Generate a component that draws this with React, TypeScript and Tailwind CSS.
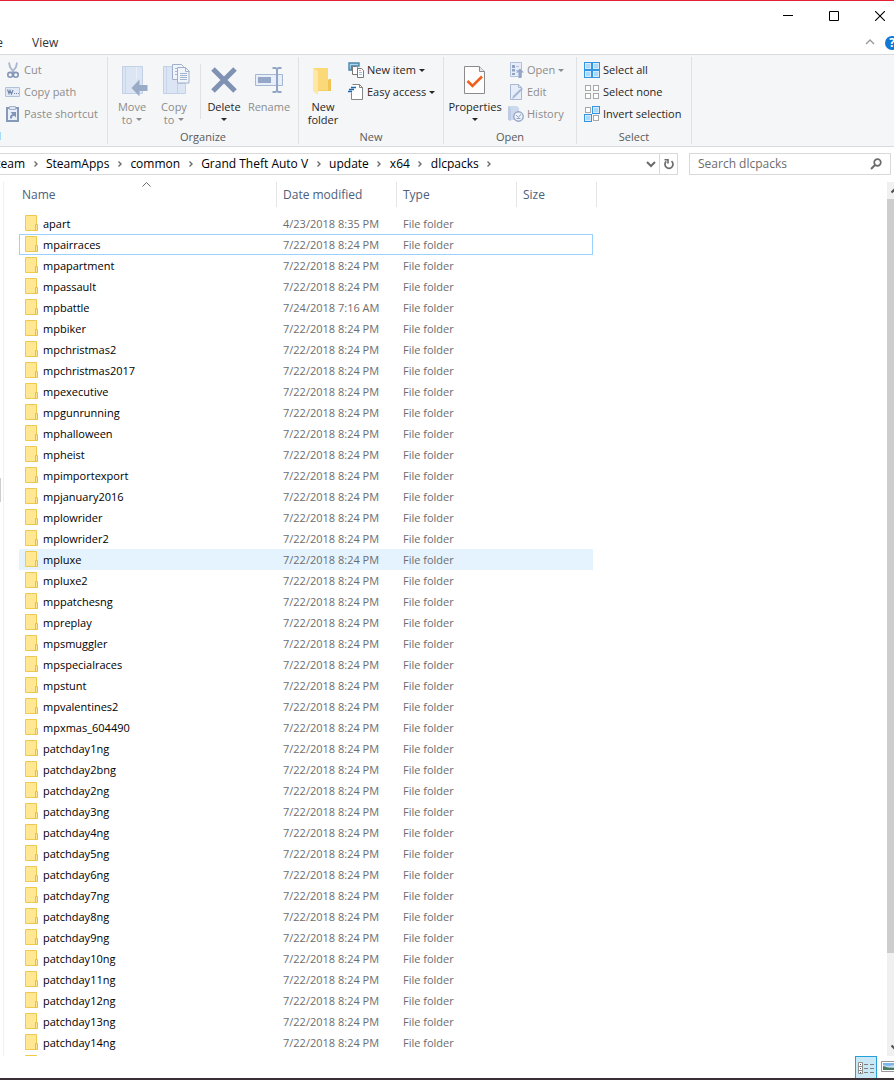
import type { ReactNode } from "react";
import { clsx } from "clsx";

const crumbs = [
  "SteamApps",
  "common",
  "Grand Theft Auto V",
  "update",
  "x64",
  "dlcpacks",
];

const usual_date = "7/22/2018 8:24 PM";

const folders = [
  { name: "apart", date: "4/23/2018 8:35 PM" },
  { name: "mpairraces", focused: true },
  { name: "mpapartment" },
  { name: "mpassault" },
  { name: "mpbattle", date: "7/24/2018 7:16 AM" },
  { name: "mpbiker" },
  { name: "mpchristmas2" },
  { name: "mpchristmas2017" },
  { name: "mpexecutive" },
  { name: "mpgunrunning" },
  { name: "mphalloween" },
  { name: "mpheist" },
  { name: "mpimportexport" },
  { name: "mpjanuary2016" },
  { name: "mplowrider" },
  { name: "mplowrider2" },
  { name: "mpluxe", hovered: true },
  { name: "mpluxe2" },
  { name: "mppatchesng" },
  { name: "mpreplay" },
  { name: "mpsmuggler" },
  { name: "mpspecialraces" },
  { name: "mpstunt" },
  { name: "mpvalentines2" },
  { name: "mpxmas_604490" },
  { name: "patchday1ng" },
  { name: "patchday2bng" },
  { name: "patchday2ng" },
  { name: "patchday3ng" },
  { name: "patchday4ng" },
  { name: "patchday5ng" },
  { name: "patchday6ng" },
  { name: "patchday7ng" },
  { name: "patchday8ng" },
  { name: "patchday9ng" },
  { name: "patchday10ng" },
  { name: "patchday11ng" },
  { name: "patchday12ng" },
  { name: "patchday13ng" },
  { name: "patchday14ng" },
  { name: "patchday15ng" },
];

interface IIcon {
  size?: number;
  children: ReactNode;
}

const Icon = ({ size = 16, children }: IIcon) => (
  <svg
    width={size}
    height={size}
    viewBox={`0 0 ${size} ${size}`}
    fill="none"
    className="shrink-0"
    aria-hidden="true"
  >
    {children}
  </svg>
);

const Caret = () => (
  <svg width="6" height="3" viewBox="0 0 6 3" className="shrink-0" aria-hidden="true">
    <path d="M0 0h6L3 3z" fill="currentColor" />
  </svg>
);

const CutIcon = () => (
  <Icon>
    <path d="M4 0.5L5 5L9.5 11M12 0.5L11 5L6.5 11" stroke="#a9b8cf" strokeWidth="1.8" />
    <circle cx="5.2" cy="12.8" r="2.4" stroke="#8497b8" strokeWidth="1.6" />
    <circle cx="10.8" cy="12.8" r="2.4" stroke="#8497b8" strokeWidth="1.6" />
  </Icon>
);

const CopyPathIcon = () => (
  <Icon>
    <path d="M0.5 3.5h14v9h-14z" fill="#e2eaf6" stroke="#b3c2db" />
    <path d="M2.5 5.5l1.5 4 1-3 1.5 3.5 1.5-4" stroke="#7387ab" strokeWidth="1.2" />
    <path d="M9 9h1v1H9zM11 9h1v1h-1zM13 9h.8v1H13z" fill="#7387ab" />
  </Icon>
);

const PasteShortcutIcon = () => (
  <Icon>
    <path d="M2 2h11v13H2z" fill="#e9f0fa" stroke="#8799b9" strokeWidth="2" />
    <path d="M4.5 0.5h6v3h-6z" fill="#dfe7f3" stroke="#a4b2ca" />
    <path d="M5 12.5c-.3-3 .8-4 2.500-4.300L5.600 6H11v5.500L9.200 9.800C7.500 10 6.800 11 7 12.500z" fill="#8094b7" />
  </Icon>
);

const MoveIcon = () => (
  <Icon size={32}>
    <path d="M6.500 2.500h20v27h-20z" fill="#dbe5f3" stroke="#c3d1e6" />
    <path d="M9.500 3v26" stroke="#c9d6ea" />
    <path d="M20.500 3v12" stroke="#e8eff8" />
    <path d="M23.500 15.500v5.500h8v6h-8v5.500l-8-8.500z" fill="#9aabc7" />
  </Icon>
);

const CopyIcon = () => (
  <Icon size={32}>
    <path d="M5.500 2.500h14v27h-14z" fill="#dbe5f3" stroke="#c3d1e6" />
    <path d="M19.500 19.500h8v10h-8z" fill="#dbe5f3" stroke="#c3d1e6" />
    <path d="M8.500 3v26" stroke="#c9d6ea" />
    <path d="M14.500 0.500h9l2 2v13h-11z" fill="#f1f5fb" stroke="#9fb0cc" />
    <path d="M17 4.500h5M17 7.500h3M17 10.500h3" stroke="#a9b9d3" />
    <path d="M19.500 3.500h8l3.500 3.500v12h-11.500z" fill="#f1f5fb" stroke="#9fb0cc" />
    <path d="M27.500 3.500v4h4M22 9.500h7M22 11.500h7M22 13.500h7M22 15.500h7" stroke="#a3b4cf" />
  </Icon>
);

const DeleteIcon = () => (
  <Icon size={32}>
    <path d="M5 5l22 22M27 5L5 27" stroke="#8092b3" strokeWidth="5" />
  </Icon>
);

const RenameIcon = () => (
  <Icon size={32}>
    <path d="M2.500 10.500h27v11h-27z" fill="#e6eefa" stroke="#a6b7d3" />
    <path d="M5 13h13v6H5z" fill="#94a7c6" />
    <path d="M19.500 4h3l1.500 1 1.500-1h3M24 4.500v23M19.500 28h3l1.500-1 1.500 1h3" stroke="#93a5c3" strokeWidth="2" />
  </Icon>
);

const NewFolderIcon = () => (
  <Icon size={32}>
    <path d="M6 4h15v12h3v11H10V8z" fill="#f5cf66" />
    <path d="M6 4h15v22H10z" fill="#fbd978" />
    <path d="M22 15h2v12h-3V16z" fill="#f0c455" />
    <path d="M6 4l5 3v24l-5-4z" fill="#ffe8a5" />
  </Icon>
);

const PropertiesIcon = () => (
  <Icon size={32}>
    <path d="M5.500 2.500h15l5 5v22h-20z" fill="#fdfdfd" stroke="#8b8b8b" />
    <path d="M20.500 2.500v5h5" fill="#e6e6e6" stroke="#8b8b8b" />
    <path d="M8.500 17l5 5L23 12.500" stroke="#f0601c" strokeWidth="2.600" />
  </Icon>
);

const NewItemIcon = () => (
  <Icon>
    <path d="M1 1h10v3H3.500v4H1z" fill="#a9d8f0" stroke="#4a86ab" strokeWidth="1.400" />
    <path d="M4.500 4.500h4l1 1v7h-5z" fill="#fff" stroke="#777" />
    <path d="M9.500 6.500h4l2 2v7h-6z" fill="#fff" stroke="#777" />
    <path d="M11 10.500h3M11 12.500h3" stroke="#8fc0ea" />
    <path d="M11 8.500h2" stroke="#e89a93" />
  </Icon>
);

const EasyAccessIcon = () => (
  <Icon>
    <path d="M4.500 0.500h7l3 3v12h-11v-7" fill="#fff" stroke="#858585" />
    <path d="M11.500 0.500v3h3" stroke="#858585" />
    <path d="M3 3.500h5M1 5.500h5M0 7.500h4" stroke="#1f68ad" strokeWidth="1.300" />
  </Icon>
);

const OpenIcon = () => (
  <Icon>
    <path d="M2.500 0.500h11v14h-11z" fill="#e6edf8" stroke="#b3c1da" />
    <path d="M4 3h3v3H4zM4 7h3v2.500H4zM4 11h3v2H4z" fill="#8fa2c3" />
    <path d="M8 4.500h3M8 8.500h2" stroke="#b3c1da" />
    <path d="M12 6.500l4 4h-2.500V16h-3v-5.500H8z" fill="#94a6c5" />
  </Icon>
);

const EditIcon = () => (
  <Icon>
    <path d="M2.500 0.500h8l3 3v12h-11z" fill="#e6edf8" stroke="#a9b8d3" />
    <path d="M10.500 0.500v3h3" stroke="#a9b8d3" />
    <path d="M15 5l-8.500 8.500L4 15l1-3L13.500 3.800z" fill="#a6b7d4" />
  </Icon>
);

const HistoryIcon = () => (
  <Icon>
    <path d="M0 0h9l2 2v12H0z" fill="#cddaed" />
    <path d="M0 0l3 2v13l-3-1z" fill="#bdcce4" />
    <circle cx="10.500" cy="10.500" r="4.700" fill="#eef3fa" stroke="#95a6c4" strokeWidth="1.400" />
    <path d="M8 9l2.500 2.500L13 8M8.500 12.500h4" stroke="#95a6c4" />
  </Icon>
);

interface ITiles {
  on: boolean[];
}

// 2x2 tile glyph shared by the three selection commands
const Tiles = ({ on }: ITiles) => (
  <Icon>
    {on.map((is_on, i) => {
      const x = (i % 2) * 8;
      const y = Math.floor(i / 2) * 8;
      return is_on ? (
        <g key={i}>
          <rect x={x + 0.5} y={y + 0.5} width="7" height="7" fill="#d3ebfd" stroke="#3495e3" />
          <rect x={x + 1.5} y={y + 1.5} width="5" height="5" fill="#a9d9fc" stroke="#d3ebfd" />
        </g>
      ) : (
        <rect key={i} x={x + 1.5} y={y + 1.5} width="5" height="5" fill="#fff" stroke="#a8a8a8" />
      );
    })}
  </Icon>
);

const FolderIcon = () => (
  <Icon>
    <path d="M2.500 0.500h11v15h-11z" fill="#ffe794" stroke="#edc94f" />
    <path d="M12.500 9.500h2v6h-2z" fill="#ffe794" stroke="#e6bf45" />
  </Icon>
);

interface ILargeButton {
  icon: ReactNode;
  label: string;
  second?: string;
  caret?: boolean;
  disabled?: boolean;
  width?: string;
}

const LargeButton = ({
  icon,
  label,
  second,
  caret,
  disabled,
  width = "w-[42px]",
}: ILargeButton) => (
  <button
    type="button"
    disabled={disabled}
    className={clsx(
      "flex shrink-0 flex-col items-center pt-[5px] leading-[13px] whitespace-nowrap",
      width,
      disabled ? "text-[#8c8c8c]" : "text-[#262626]",
    )}
  >
    {icon}
    <span className="mt-1">{label}</span>
    <span className="flex h-[13px] items-center gap-1">
      {second}
      {caret && <Caret />}
    </span>
  </button>
);

interface ISmallButton {
  icon: ReactNode;
  label: string;
  caret?: boolean;
  disabled?: boolean;
}

const SmallButton = ({ icon, label, caret, disabled }: ISmallButton) => (
  <button
    type="button"
    disabled={disabled}
    className={clsx(
      "flex h-[22px] items-center gap-[3px] whitespace-nowrap",
      disabled ? "text-[#8c8c8c]" : "text-[#262626]",
    )}
  >
    {icon}
    <span>{label}</span>
    {caret && <Caret />}
  </button>
);

interface IRibbonGroup {
  label?: string;
  width: string;
  children: ReactNode;
}

const RibbonGroup = ({ label, width, children }: IRibbonGroup) => (
  <section
    className={clsx(
      "my-0.5 flex shrink-0 flex-col justify-between border-r border-[#dfe1e3]",
      width,
    )}
  >
    <div className="flex pt-0.5">{children}</div>
    <h2 className="text-center leading-[14px] text-[#5a5a5a]">{label}</h2>
  </section>
);

const TitleBar = () => (
  <header className="-mr-[9px] flex h-[30px] shrink-0 justify-end border-t border-[#e81e36]">
    <button type="button" aria-label="Minimize" className="flex w-[46px] items-center justify-center">
      <Icon size={10}>
        <path d="M0 4.500h10" stroke="#000" />
      </Icon>
    </button>
    <button type="button" aria-label="Maximize" className="flex w-[46px] items-center justify-center">
      <Icon size={10}>
        <path d="M0.500 0.500h9v9h-9z" stroke="#000" />
      </Icon>
    </button>
    <button type="button" aria-label="Close" className="flex w-[46px] items-center justify-center">
      <Icon size={10}>
        <path d="M0 0l10 10M10 0L0 10" stroke="#000" strokeWidth="1.100" />
      </Icon>
    </button>
  </header>
);

const Tabs = () => (
  <nav className="flex h-6 shrink-0 items-center pt-0.5 text-[12px] text-[#333]">
    <button type="button" className="flex w-[3px] justify-end overflow-hidden">
      Share
    </button>
    <button type="button" className="ml-[29px]">
      View
    </button>
    <button type="button" aria-label="Minimize the Ribbon" className="ml-auto">
      <Icon size={10}>
        <path d="M1 6l4-4 4 4" stroke="#999" strokeWidth="1.400" />
      </Icon>
    </button>
    <button
      type="button"
      aria-label="Help"
      className="-mr-[5px] ml-[10px] size-3.5 rounded-full bg-[#0f78d4] text-center leading-[14px] font-bold text-white"
    >
      ?
    </button>
  </nav>
);

const Ribbon = () => (
  <div className="flex h-[93px] shrink-0 border-y border-[#d9dbdd] bg-[#f5f6f7]">
    <div className="mt-[77px] h-2 w-px shrink-0 bg-[#a5dcf8]" />
    <RibbonGroup width="w-[107px]">
      <div className="ml-1 flex flex-col">
        <SmallButton icon={<CutIcon />} label="Cut" disabled />
        <SmallButton icon={<CopyPathIcon />} label="Copy path" disabled />
        <SmallButton icon={<PasteShortcutIcon />} label="Paste shortcut" disabled />
      </div>
    </RibbonGroup>
    <RibbonGroup label="Organize" width="w-[191px]">
      <div className="ml-[3px] flex">
        <LargeButton icon={<MoveIcon />} label="Move" second="to" caret disabled />
        <LargeButton icon={<CopyIcon />} label="Copy" second="to" caret disabled />
        <div className="mt-[5px] mr-0.5 ml-[5px] h-[55px] w-px bg-[#dfe1e3]" />
        <LargeButton icon={<DeleteIcon />} label="Delete" caret />
        <LargeButton icon={<RenameIcon />} label="Rename" width="w-12" disabled />
      </div>
    </RibbonGroup>
    <RibbonGroup label="New" width="w-[145px]">
      <div className="ml-[3px] flex">
        <LargeButton icon={<NewFolderIcon />} label="New" second="folder" />
        <div className="ml-1 flex flex-col">
          <SmallButton icon={<NewItemIcon />} label="New item" caret />
          <SmallButton icon={<EasyAccessIcon />} label="Easy access" caret />
        </div>
      </div>
    </RibbonGroup>
    <RibbonGroup label="Open" width="w-[133px]">
      <div className="ml-[3px] flex">
        <LargeButton icon={<PropertiesIcon />} label="Properties" width="w-14" caret />
        <div className="ml-[5px] flex flex-col">
          <SmallButton icon={<OpenIcon />} label="Open" caret disabled />
          <SmallButton icon={<EditIcon />} label="Edit" disabled />
          <SmallButton icon={<HistoryIcon />} label="History" disabled />
        </div>
      </div>
    </RibbonGroup>
    <RibbonGroup label="Select" width="w-[115px]">
      <div className="ml-[7px] flex flex-col">
        <SmallButton icon={<Tiles on={[true, true, true, true]} />} label="Select all" />
        <SmallButton icon={<Tiles on={[false, false, false, false]} />} label="Select none" />
        <SmallButton icon={<Tiles on={[false, true, true, false]} />} label="Invert selection" />
      </div>
    </RibbonGroup>
  </div>
);

const CrumbArrow = () => (
  <span className="flex w-[21px] shrink-0 justify-center">
    <Icon size={6}>
      <path d="M1.500 0.500L4 3L1.500 5.500" stroke="#6b6b6b" strokeWidth="1.400" />
    </Icon>
  </span>
);

const AddressBar = () => (
  <div className="mt-1.5 mr-[3px] flex h-[22px] shrink-0 gap-[11px] text-[12px]">
    <div className="flex min-w-0 flex-1 items-center border border-l-0 border-[#d9d9d9] text-black">
      <a href="#Steam" className="flex w-[25px] justify-end overflow-hidden">
        Steam
      </a>
      <CrumbArrow />
      {crumbs.map((crumb) => (
        <span key={crumb} className="flex items-center whitespace-nowrap">
          <a href={`#${crumb}`}>{crumb}</a>
          <CrumbArrow />
        </span>
      ))}
      <button type="button" aria-label="Previous locations" className="ml-auto px-[3px]">
        <Icon size={10}>
          <path d="M1 3l4 4 4-4" stroke="#6b6b6b" strokeWidth="2" />
        </Icon>
      </button>
      <button
        type="button"
        aria-label="Refresh"
        className="flex h-full w-[18px] items-center justify-center border-l border-[#d9d9d9]"
      >
        <Icon size={12}>
          <path d="M8.500 3.200A4 4 0 1 1 3.200 3.400" stroke="#6b6b6b" strokeWidth="1.700" />
          <path d="M1.500 1.800H5V5.500" stroke="#6b6b6b" strokeWidth="1.600" />
        </Icon>
      </button>
    </div>
    <div className="flex w-[202px] items-center border border-[#d9d9d9] pr-2 pl-2">
      <input
        type="search"
        aria-label="Search dlcpacks"
        placeholder="Search dlcpacks"
        className="min-w-0 flex-1 outline-none placeholder:text-[#6d6d6d]"
      />
      <Icon size={12}>
        <circle cx="7.500" cy="4.500" r="3.300" stroke="#6b6b6b" strokeWidth="1.700" />
        <path d="M5 7L1 11" stroke="#6b6b6b" strokeWidth="2" />
      </Icon>
    </div>
  </div>
);

interface IHeaderCell {
  label: string;
  inset: string;
  span?: number;
  sorted?: boolean;
}

const HeaderCell = ({ label, inset, span, sorted }: IHeaderCell) => (
  <th colSpan={span} className="h-[31px] p-0 text-left align-top font-normal">
    <div
      className={clsx(
        "relative flex h-[25px] items-center border-r border-[#e5e5e5] text-[12px] text-[#4c607a]",
        inset,
      )}
    >
      {label}
      {sorted && (
        <svg width="9" height="5" viewBox="0 0 9 5" fill="none" className="absolute top-0 left-[123px]">
          <path d="M0.500 4.500l4-4 4 4" stroke="#6d6d6d" />
        </svg>
      )}
    </div>
  </th>
);

const FileList = () => (
  <div className="min-w-0 flex-1 overflow-hidden border-l border-[#f0f0f0] pl-[15px]">
    <table className="w-[578px] table-fixed border-collapse">
      <colgroup>
        <col className="w-[258px]" />
        <col className="w-[120px]" />
        <col className="w-[120px]" />
        <col className="w-[76px]" />
        <col className="w-1" />
      </colgroup>
      <thead>
        <tr>
          <HeaderCell label="Name" inset="pl-[3px]" sorted />
          <HeaderCell label="Date modified" inset="pl-1.5" />
          <HeaderCell label="Type" inset="pl-1.5" />
          <HeaderCell label="Size" inset="pl-1.5" span={2} />
        </tr>
      </thead>
      <tbody>
        {folders.map(({ name, date, focused, hovered }) => (
          <tr key={name} className="leading-[21px] text-[#6d6d6d]">
            <td
              className={clsx(
                "h-[21px] p-0",
                focused && "shadow-[inset_1px_1px_#99d1ff,inset_0_-1px_#99d1ff]",
                hovered && "bg-[#e5f3ff]",
              )}
            >
              <div className="flex h-[21px] gap-1 pl-1 text-black">
                <span className="pt-0.5">
                  <FolderIcon />
                </span>
                {name}
              </div>
            </td>
            <td
              className={clsx(
                "p-0 pl-1.5 whitespace-nowrap",
                focused && "shadow-[inset_0_1px_#99d1ff,inset_0_-1px_#99d1ff]",
                hovered && "bg-[#e5f3ff]",
              )}
            >
              {date ?? usual_date}
            </td>
            <td
              className={clsx(
                "p-0 pl-1.5",
                focused && "shadow-[inset_0_1px_#99d1ff,inset_0_-1px_#99d1ff]",
                hovered && "bg-[#e5f3ff]",
              )}
            >
              File folder
            </td>
            <td
              className={clsx(
                "p-0",
                focused && "shadow-[inset_-1px_-1px_#99d1ff,inset_0_1px_#99d1ff]",
                hovered && "bg-[#e5f3ff]",
              )}
            />
            <td className="p-0" />
          </tr>
        ))}
      </tbody>
    </table>
  </div>
);

const ScrollBar = () => (
  <div className="flex w-[7px] shrink-0 flex-col overflow-hidden bg-[#f0f0f0]">
    <button type="button" aria-label="Scroll up" className="h-[17px] w-[17px] shrink-0">
      <Icon size={17}>
        <path d="M4.500 10.500l4-4 4 4" stroke="#505050" strokeWidth="2" />
      </Icon>
    </button>
    <div className="h-[754px] bg-[#cdcdcd]" />
    <button type="button" aria-label="Scroll down" className="mt-auto h-[17px] w-[17px] shrink-0">
      <Icon size={17}>
        <path d="M4.500 6.500l4 4 4-4" stroke="#505050" strokeWidth="2" />
      </Icon>
    </button>
  </div>
);

const StatusBar = () => (
  <footer className="-mr-[5px] flex h-6 shrink-0 justify-end border-b-2 border-[#3a2f35]">
    <button
      type="button"
      aria-label="Details view"
      className="flex w-[22px] items-center justify-center border border-b-0 border-[#26a0da] bg-[#cbe8f6]"
    >
      <Icon>
        <path d="M0.500 2.500h4v11h-4zM0.500 6.500h4M0.500 10.500h4" fill="#fff" stroke="#8f8f8f" />
        <path d="M2 4h1v1H2zM2 8h1v1H2zM2 12h1v1H2z" fill="#555" />
        <path d="M6 4.500h4M12 4.500h4M6 8.500h4M12 8.500h4M6 12.500h4M12 12.500h4" stroke="#808080" />
      </Icon>
    </button>
    <button type="button" aria-label="Large icons view" className="flex w-[22px] items-center justify-end">
      <svg width="18" height="12" viewBox="0 0 18 12" fill="none" aria-hidden="true">
        <path d="M0.500 0.500h17v10h-17z" fill="#fff" stroke="#999" />
        <path d="M2 2h14v4H2z" fill="#7db4ea" />
        <path d="M2 4l5 1 9-1v3H2z" fill="#c9e2f5" />
        <path d="M2 5l5 1.500L16 7v2H2z" fill="#4b7a63" />
      </svg>
    </button>
  </footer>
);

export default function App() {
  return (
    <div className="flex h-screen flex-col overflow-hidden bg-white font-['Open_Sans','Noto_Sans',sans-serif] text-[11px] leading-4">
      <TitleBar />
      <Tabs />
      <Ribbon />
      <AddressBar />
      <main className="mt-[7px] flex min-h-0 flex-1">
        <div className="w-[3px] shrink-0">
          <div className="mt-[296px] h-6 w-px bg-[#cdcdcd]" />
        </div>
        <FileList />
        <ScrollBar />
      </main>
      <StatusBar />
    </div>
  );
}
